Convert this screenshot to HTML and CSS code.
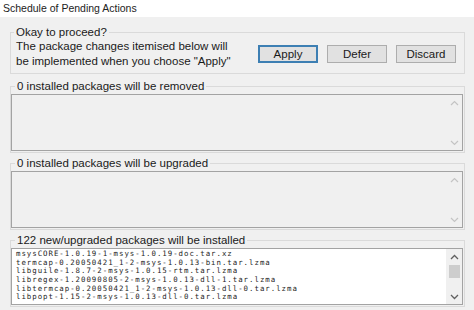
FILE: index.html
```html
<!DOCTYPE html>
<html>
<head>
<meta charset="utf-8">
<link rel="stylesheet" href="styles.css">
</head>
<body>
<div class="titlebar">Schedule of Pending Actions</div>
<main class="content">
  <fieldset class="group group-top">
    <legend class="legend">Okay to proceed?</legend>
    <div class="proceed">
      <p class="message">The package changes itemised below will<br>be implemented when you choose "Apply"</p>
      <div class="buttons">
        <button class="btn btn-default">Apply</button>
        <button class="btn">Defer</button>
        <button class="btn">Discard</button>
      </div>
    </div>
  </fieldset>

  <fieldset class="group">
    <legend class="legend">0 installed packages will be removed</legend>
    <div class="listbox disabled">
      <div class="list-body"></div>
      <div class="scrollbar">
        <svg class="arrow" width="9" height="6" viewBox="0 0 9 6"><path d="M1 5 L4.5 1.5 L8 5" fill="none" stroke="currentColor" stroke-width="1.2"/></svg>
        <div class="track"></div>
        <svg class="arrow" width="9" height="6" viewBox="0 0 9 6"><path d="M1 1 L4.5 4.5 L8 1" fill="none" stroke="currentColor" stroke-width="1.2"/></svg>
      </div>
    </div>
  </fieldset>

  <fieldset class="group">
    <legend class="legend">0 installed packages will be upgraded</legend>
    <div class="listbox disabled">
      <div class="list-body"></div>
      <div class="scrollbar">
        <svg class="arrow" width="9" height="6" viewBox="0 0 9 6"><path d="M1 5 L4.5 1.5 L8 5" fill="none" stroke="currentColor" stroke-width="1.2"/></svg>
        <div class="track"></div>
        <svg class="arrow" width="9" height="6" viewBox="0 0 9 6"><path d="M1 1 L4.5 4.5 L8 1" fill="none" stroke="currentColor" stroke-width="1.2"/></svg>
      </div>
    </div>
  </fieldset>

  <fieldset class="group">
    <legend class="legend">122 new/upgraded packages will be installed</legend>
    <div class="listbox active">
      <ul class="list-body packages">
        <li>msysCORE-1.0.19-1-msys-1.0.19-doc.tar.xz</li>
        <li>termcap-0.20050421_1-2-msys-1.0.13-bin.tar.lzma</li>
        <li>libguile-1.8.7-2-msys-1.0.15-rtm.tar.lzma</li>
        <li>libregex-1.20090805-2-msys-1.0.13-dll-1.tar.lzma</li>
        <li>libtermcap-0.20050421_1-2-msys-1.0.13-dll-0.tar.lzma</li>
        <li>libpopt-1.15-2-msys-1.0.13-dll-0.tar.lzma</li>
      </ul>
      <div class="scrollbar">
        <svg class="arrow" width="9" height="6" viewBox="0 0 9 6"><path d="M1 5 L4.5 1.5 L8 5" fill="none" stroke="currentColor" stroke-width="1.3"/></svg>
        <div class="track"><div class="thumb"></div></div>
        <svg class="arrow" width="9" height="6" viewBox="0 0 9 6"><path d="M1 1 L4.5 4.5 L8 1" fill="none" stroke="currentColor" stroke-width="1.3"/></svg>
      </div>
    </div>
  </fieldset>
</main>
</body>
</html>
```

FILE: styles.css
```css
* { box-sizing: border-box; }

html, body {
  margin: 0;
  padding: 0;
}

body {
  width: 474px;
  height: 310px;
  overflow: hidden;
  background: #f0f0f0;
  font-family: "Liberation Sans", Arial, sans-serif;
  font-size: 11.5px;
  color: #1a1a1a;
}

.titlebar {
  height: 17px;
  background: #ffffff;
  padding-left: 3px;
  font-size: 10.5px;
  line-height: 17px;
  color: #222;
}

.content {
  display: flex;
  flex-direction: column;
  padding: 8px 9px 0 10px;
  gap: 3px;
}

.group {
  margin: 0;
  padding: 0 1px 1px 0;
  min-width: 0;
  border: 1px solid #dadada;
}

.group-top {
  padding: 0 8px 4px 5px;
  margin-bottom: 2px;
}

.legend {
  padding: 0 2px;
  margin-left: 4px;
  height: 14px;
  line-height: 14px;
  font-size: 11.5px;
  color: #1a1a1a;
}

.group-top .legend {
  margin-left: -2px;
}

.proceed {
  display: flex;
  align-items: center;
  justify-content: space-between;
}

.message {
  margin: 0;
  line-height: 15px;
  font-size: 11.5px;
}

.buttons {
  display: flex;
  gap: 9px;
  padding-bottom: 1px;
}

.btn {
  width: 60px;
  height: 18px;
  padding: 0;
  font-family: inherit;
  font-size: 11.5px;
  color: #1a1a1a;
  background: #e1e1e1;
  border: 1px solid #adadad;
  border-radius: 0;
  line-height: 14px;
}

.btn-default {
  border: 2px solid #3d7fb3;
}

.listbox {
  margin-top: 1px;
  height: 57px;
  border: 1px solid #a3a3a3;
  display: flex;
}

.listbox.disabled {
  background: #f0f0f0;
}

.listbox.active {
  background: #ffffff;
}

.list-body {
  flex: 1;
  min-width: 0;
}

.packages {
  list-style: none;
  margin: 0;
  padding: 1px 0 0 4px;
  font-family: "DejaVu Sans Mono", "Liberation Mono", monospace;
  font-size: 7.4px;
  letter-spacing: 0.97px;
  line-height: 8.65px;
  color: #1e1e1e;
  white-space: nowrap;
  overflow: hidden;
}

.scrollbar {
  width: 16px;
  display: flex;
  flex-direction: column;
  align-items: center;
  padding: 5px 0 4px;
  background: #f0f0f0;
}

.disabled .scrollbar {
  color: #c4c4c4;
}

.active .scrollbar {
  color: #606060;
}

.track {
  flex: 1;
  width: 100%;
  padding: 5px 2px 0 3px;
}

.thumb {
  width: 11px;
  height: 13px;
  background: #cdcdcd;
}

.arrow {
  display: block;
}
```
